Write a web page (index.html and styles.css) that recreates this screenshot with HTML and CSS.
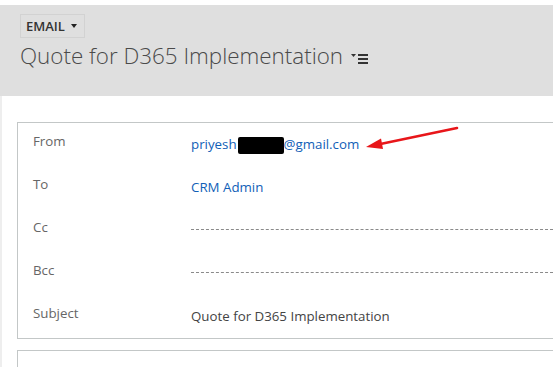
FILE: index.html
```html
<!DOCTYPE html>
<html lang="en">
<head>
  <meta charset="UTF-8">
  <meta name="viewport" content="width=device-width, initial-scale=1.0">
  <title>Quote for D365 Implementation</title>
  <link rel="stylesheet" href="styles.css">
</head>
<body>
  <header class="record-header">
    <div class="entity-switch">
      <span>EMAIL</span>
      <span class="caret"></span>
    </div>
    <h1 class="record-title">
      Quote for D365 Implementation
      <svg class="title-menu" width="18" height="11" viewBox="0 0 18 11">
        <polygon points="0,1 5,1 2.5,4" fill="#333"/>
        <rect x="7" y="1" width="10" height="2" fill="#333"/>
        <rect x="7" y="5" width="10" height="2" fill="#333"/>
        <rect x="7" y="9" width="10" height="2" fill="#333"/>
      </svg>
    </h1>
  </header>

  <main class="content">
    <section class="form-box">
      <div class="field-row">
        <div class="field-label">From</div>
        <div class="field-value link">priyesh<span class="redacted"></span>@gmail.com</div>
      </div>
      <div class="field-row">
        <div class="field-label">To</div>
        <div class="field-value link">CRM Admin</div>
      </div>
      <div class="field-row">
        <div class="field-label">Cc</div>
        <div class="field-value"><div class="empty-line"></div></div>
      </div>
      <div class="field-row">
        <div class="field-label">Bcc</div>
        <div class="field-value"><div class="empty-line"></div></div>
      </div>
      <div class="field-row">
        <div class="field-label">Subject</div>
        <div class="field-value">Quote for D365 Implementation</div>
      </div>
    </section>
    <section class="form-box next-box"></section>
  </main>

  <!-- annotation arrow -->
  <svg class="arrow" width="553" height="368" viewBox="0 0 553 368">
    <line x1="457" y1="128" x2="378" y2="144.5" stroke="#e8161a" stroke-width="2.6" stroke-linecap="round"/>
    <polygon points="366,147 383,149 381,138.5" fill="#e8161a"/>
  </svg>
</body>
</html>
```

FILE: styles.css
```css
html, body {
  height: 100%;
}

body {
  margin: 0;
  font-family: "Open Sans", "Noto Sans", Arial, sans-serif;
  background: #fff;
  overflow: hidden;
}

/* Header */
.record-header {
  margin-top: 5px;
  height: 91px;
  background: #dfdfdf;
  padding: 9px 20px 0;
  box-sizing: border-box;
}

.entity-switch {
  display: inline-flex;
  align-items: center;
  gap: 6px;
  height: 24px;
  padding: 0 7px 0 5px;
  box-sizing: border-box;
  border: 1px solid #d2d2d2;
  font-size: 13px;
  font-weight: 600;
  color: #333;
}

.caret {
  width: 0;
  height: 0;
  border-left: 3.5px solid transparent;
  border-right: 3.5px solid transparent;
  border-top: 4px solid #222;
}

.record-title {
  margin: 2px 0 0;
  font-size: 22.4px;
  font-weight: 300;
  color: #4a4a4a;
  line-height: 32px;
  white-space: nowrap;
}

.title-menu {
  vertical-align: middle;
  margin-left: 2px;
}

/* Form */
.content {
  margin-left: 2px;
  padding: 26px 0 0 15px;
  box-shadow: -2px 0 0 #eeeeee;
}

.form-box {
  border: 1px solid #c3c7c7;
  border-right: 0;
  margin-right: -10px;
}

.next-box {
  margin-top: 11px;
  height: 16px;
  border-bottom: 0;
}

.field-row {
  display: grid;
  grid-template-columns: 158px 1fr;
  height: 43px;
  padding-left: 15px;
  font-size: 13.3px;
}

.field-label {
  padding-top: 9px;
  color: #666;
}

.field-value {
  padding-top: 12px;
  color: #444;
  white-space: nowrap;
}

.field-value.link {
  color: #1160b7;
}

.redacted {
  display: inline-block;
  width: 46px;
  height: 17px;
  margin-left: 1px;
  background: #000;
  border-radius: 2px;
  vertical-align: -5px;
}

.empty-line {
  margin-top: -12px;
  height: 20px;
  border-bottom: 1px dashed #8a8a8a;
}

.arrow {
  position: absolute;
  left: 0;
  top: 0;
  pointer-events: none;
}
```
